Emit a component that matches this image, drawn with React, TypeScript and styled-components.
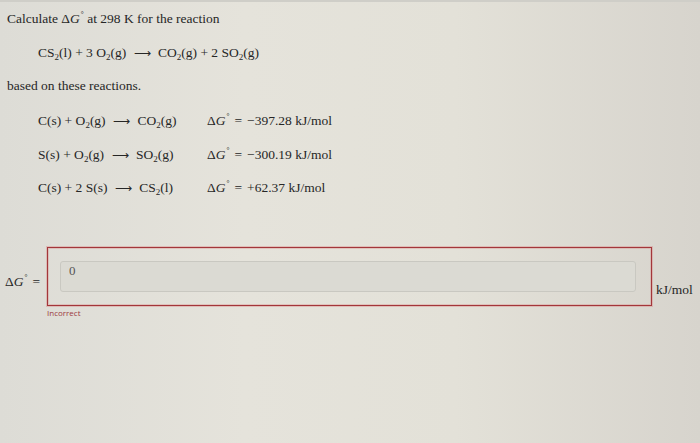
import React from "react";
import styled, { createGlobalStyle } from "styled-components";

const Global = createGlobalStyle`
  html, body { margin: 0; padding: 0; }
  body {
    width: 700px; height: 443px; overflow: hidden;
    font-family: "Liberation Serif", "Times New Roman", serif;
    color: #262626;
  }
`;

const Page = styled.div`
  width: 700px; height: 443px; box-sizing: border-box;
  background: linear-gradient(90deg, #dddcd6 0%, #e5e3db 35%, #e3e1d8 65%, #d7d4cd 100%);
  border-top: 2px solid #cfcec8;
  padding: 9px 0 0 7px;
  display: flex; flex-direction: column;
`;

const Line = styled.div<{ $indent?: number; $mt?: number }>`
  font-size: 13.5px;
  height: 16px;
  line-height: 16px;
  margin-left: ${p => p.$indent ?? 0}px;
  margin-top: ${p => p.$mt ?? 0}px;
  white-space: nowrap;
`;

const Reactions = styled.div`
  display: grid;
  grid-template-columns: 169px auto;
  grid-auto-rows: 16px;
  row-gap: 17.5px;
  margin: 19px 0 0 31px;
  font-size: 13.5px;
  line-height: 16px;
  white-space: nowrap;
`;

const Arrow = styled.span`
  display: inline-block;
  margin: 0 4px;
  font-size: 12px;
`;

const Eq = styled.span`
  margin: 0 5px;
`;

const Sub = styled.sub`
  font-size: 9px;
  line-height: 0;
  vertical-align: baseline;
  position: relative;
  top: 3px;
`;

const Deg = styled.sup`
  font-size: 7.5px;
  line-height: 0;
  vertical-align: baseline;
  position: relative;
  top: -6px;
  margin-left: 1px;
`;

const AnswerRow = styled.div`
  display: flex; align-items: flex-start;
  margin-top: 51px;
  margin-left: -2px;
`;

const Label = styled.div`
  font-size: 13.5px; width: 42px; padding-top: 27px; line-height: 16px; white-space: nowrap;
`;

const BoxWrap = styled.div`
  display: flex; flex-direction: column;
`;

const RedBox = styled.div`
  width: 605px; height: 59px; box-sizing: border-box;
  border: 1px solid #a3363a;
  box-shadow: 0 0 0 1px rgba(214, 120, 120, 0.35), inset 0 0 0 1px rgba(214, 120, 120, 0.3);
  padding: 13px 15px 0 12px;
`;

const Field = styled.div`
  height: 31px; box-sizing: border-box;
  background: #dbdad3;
  border: 1px solid #c9c8c1;
  border-radius: 3px;
  padding: 1px 0 0 8px;
  font-size: 13px; line-height: 16px; color: #555;
`;

const Incorrect = styled.div`
  font-family: "Open Sans", "Liberation Sans", sans-serif;
  font-size: 8px; color: #9c3b3e; margin: 1px 0 0 0;
`;

const Unit = styled.div`
  font-size: 13.5px; padding-top: 35px; margin-left: 4px; white-space: nowrap;
`;

const DG = () => (<>Δ<i>G</i><Deg>°</Deg></>);
const S2 = () => <Sub>2</Sub>;
const A = () => <Arrow>⟶</Arrow>;

export default function App() {
  return (
    <>
      <Global />
      <Page>
        <Line>Calculate <DG /> at 298 K for the reaction</Line>
        <Line $indent={31} $mt={18}>
          CS<S2 />(l) + 3 O<S2 />(g) <A /> CO<S2 />(g) + 2 SO<S2 />(g)
        </Line>
        <Line $mt={17}>based on these reactions.</Line>
        <Reactions>
          <div>C(s) + O<S2 />(g) <A /> CO<S2 />(g)</div>
          <div><DG /><Eq>=</Eq>−397.28 kJ/mol</div>
          <div>S(s) + O<S2 />(g) <A /> SO<S2 />(g)</div>
          <div><DG /><Eq>=</Eq>−300.19 kJ/mol</div>
          <div>C(s) + 2 S(s) <A /> CS<S2 />(l)</div>
          <div><DG /><Eq>=</Eq>+62.37 kJ/mol</div>
        </Reactions>
        <AnswerRow>
          <Label><DG /><Eq>=</Eq></Label>
          <BoxWrap>
            <RedBox>
              <Field>0</Field>
            </RedBox>
            <Incorrect>Incorrect</Incorrect>
          </BoxWrap>
          <Unit>kJ/mol</Unit>
        </AnswerRow>
      </Page>
    </>
  );
}
